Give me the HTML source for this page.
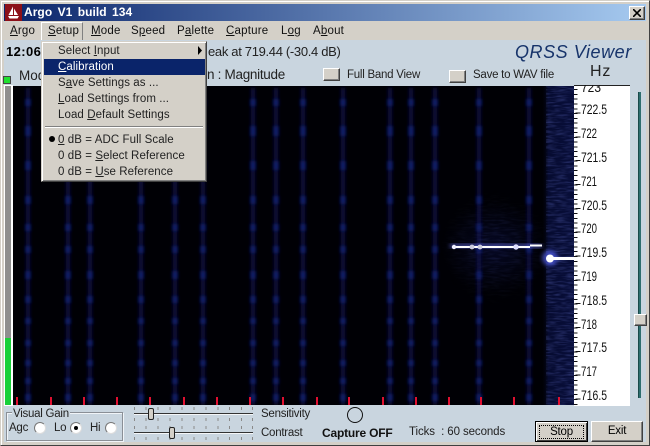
<!DOCTYPE html>
<html><head><meta charset="utf-8">
<style>
html,body{margin:0;padding:0}
body{width:650px;height:446px;overflow:hidden;position:relative;background:#d4d0c8;font-family:"Liberation Sans",sans-serif;color:#000}
.a{position:absolute;white-space:nowrap}
.t{font-size:11.5px;line-height:14px;letter-spacing:-.25px}
.frame{position:absolute;left:0;top:0;width:648px;height:444px;border:1px solid #d4d0c8;border-right-color:#404040;border-bottom-color:#404040;box-shadow:inset 1px 1px 0 #fff}
.title{position:absolute;left:4px;top:4px;width:642px;height:17px;background:linear-gradient(90deg,#0a246a,#a6caf0)}
.client{position:absolute;left:4px;top:40px;width:642px;height:402px;background:#c9d5df}
.rb{background:#d4d0c8;box-sizing:border-box;border:1px solid;border-color:#fff #404040 #404040 #fff;box-shadow:inset -1px -1px 0 #808080}
.menu span{position:absolute;top:24px;font-size:11.5px;line-height:14px;letter-spacing:.2px;color:#111}
.pop{position:absolute;left:41px;top:41px;width:166px;height:141px;box-sizing:border-box;background:#d4d0c8;border:1px solid;border-color:#d4d0c8 #404040 #404040 #d4d0c8;box-shadow:inset 1px 1px 0 #fff,inset -1px -1px 0 #808080}
.pi{position:absolute;left:58px;font-size:11.5px;line-height:14px;letter-spacing:.08px;color:#222;white-space:nowrap}
.radio{position:absolute;width:12px;height:12px;border-radius:50%;background:#fff;box-sizing:border-box;border:1px solid;border-color:#777 #ddd #ddd #777}
.btn{position:absolute;box-sizing:border-box;background:#d4d0c8;border:1px solid;border-color:#fff #404040 #404040 #fff;box-shadow:inset -1px -1px 0 #808080;text-align:center;font-size:11.5px;line-height:18px;letter-spacing:-.2px}
</style></head><body>
<div class="frame"></div>
<div class="title"></div>
<svg class="a" style="left:5px;top:4px" width="17" height="17" viewBox="0 0 17 17"><rect width="17" height="17" fill="#8c1018"/><path d="M8 2.5V11H3.5zM9 4.5 13 11H9zM3 12h11l-1.500 2.500h-8z" fill="#fff"/></svg>
<div class="a" style="left:24px;top:5px;font-size:12px;line-height:15px;font-weight:bold;color:#fff;letter-spacing:.05px;word-spacing:2px">Argo V1 build 134</div>
<div class="btn" style="left:629px;top:6px;width:16px;height:14px"></div>
<svg class="a" style="left:633px;top:9px" width="8" height="8"><path d="M0 0 8 8M8 0 0 8" stroke="#000" stroke-width="1.6"/></svg>

<div class="a" style="left:41px;top:22px;width:42px;height:19px;box-sizing:border-box;border:1px solid;border-color:#fff #808080 #808080 #fff"></div>
<div class="menu">
<span style="left:10px"><u>A</u>rgo</span>
<span style="left:48px"><u>S</u>etup</span>
<span style="left:91px"><u>M</u>ode</span>
<span style="left:131px">S<u>p</u>eed</span>
<span style="left:177px">P<u>a</u>lette</span>
<span style="left:226px"><u>C</u>apture</span>
<span style="left:281px">L<u>o</u>g</span>
<span style="left:313px">A<u>b</u>out</span>
</div>

<div class="client"></div>
<div class="a" style="left:6px;top:44px;font-size:13px;line-height:16px;font-weight:bold;letter-spacing:.4px">12:06</div>
<div class="a" style="left:208px;top:44px;font-size:13px;line-height:16px;letter-spacing:-.32px;color:#222">eak at 719.44 (-30.4 dB)</div>
<div class="a" style="left:19px;top:68px;font-size:13.5px;line-height:16px;color:#222">Mod</div>
<div class="a" style="left:207px;top:67px;font-size:13.5px;line-height:16px;color:#222;letter-spacing:-.3px">n : Magnitude</div>
<div class="a" style="left:515px;top:41px;font-size:18px;line-height:22px;font-style:italic;color:#16336a;letter-spacing:.55px">QRSS Viewer</div>
<div class="rb a" style="left:323px;top:68px;width:17px;height:13px"></div>
<div class="a t" style="left:347px;top:68px;color:#222">Full Band View</div>
<div class="rb a" style="left:449px;top:70px;width:17px;height:13px"></div>
<div class="a t" style="left:473px;top:68px;color:#222">Save to WAV file</div>
<div class="a" style="left:590px;top:63px;font-size:16px;line-height:18px;color:#222;letter-spacing:.8px">Hz</div>

<!-- level meter -->
<div class="a" style="left:3px;top:76px;width:8px;height:8px;background:#20e030;border:1px solid #444;box-sizing:border-box"></div>
<div class="a" style="left:4px;top:85px;width:9px;height:321px;background:#fff"></div>
<div class="a" style="left:5px;top:86px;width:6px;height:252px;background:#8f8f8f"></div>
<div class="a" style="left:5px;top:338px;width:6px;height:67px;background:#18d038"></div>

<!-- waterfall -->
<svg class="a" style="left:13px;top:86px" width="561" height="319" viewBox="13 86 561 319">
<defs>
<filter id="b" x="-5%" y="-5%" width="110%" height="110%"><feGaussianBlur stdDeviation="1.6 1.5"/></filter>
<filter id="g" x="-20%" y="-20%" width="140%" height="140%"><feGaussianBlur stdDeviation="2.2"/></filter>
<filter id="n" x="0" y="0" width="100%" height="100%"><feTurbulence type="fractalNoise" baseFrequency=".09 .55" numOctaves="2" seed="4"/><feColorMatrix values="0 0 0 0 .06  0 0 0 0 .08  0 0 0 0 .32  1.1 0 0 0 -.45"/></filter>
<linearGradient id="band" x1="0" x2="1" y1="0" y2="0"><stop offset="0" stop-color="#000" stop-opacity="0"/><stop offset=".22" stop-color="#060b30"/><stop offset="1" stop-color="#080e3a"/></linearGradient>
<radialGradient id="hz"><stop offset="0" stop-color="#141c70" stop-opacity=".3"/><stop offset="1" stop-color="#0a1050" stop-opacity="0"/></radialGradient>
<radialGradient id="hz2"><stop offset="0" stop-color="#888"/><stop offset=".55" stop-color="#444"/><stop offset="1" stop-color="#000"/></radialGradient>
<mask id="hm"><rect x="440" y="190" width="110" height="115" fill="url(#hz2)"/></mask>
</defs>
<rect x="13" y="86" width="561" height="319" fill="#000005"/>
<g filter="url(#b)" stroke="#080e3c" stroke-width="4">
<path d="M28 88V405M68 88V405M90 88V405M141 88V405M175 88V405M203 88V405M253 88V405M276 88V405M303 88V405M343 88V405M390 88V405M411 88V405M435 88V405M479 88V405M529 88V405"/>
</g>
<g filter="url(#b)" stroke="#111c66" stroke-width="5" stroke-dasharray="7 20 10 25 9 26 8 20 7 15 7 18 8 17 7 15 6 16 6 14 6 12 6 10 7 16 6 15 6 10">
<path d="M28 99V405M68 99V405M90 99V405M141 99V405M175 99V405M203 99V405M253 99V405M276 99V405M303 99V405M343 99V405M390 99V405M411 99V405M435 99V405M479 99V405M529 99V405"/>
</g>
<rect x="440" y="190" width="110" height="115" fill="#000" filter="url(#n)" mask="url(#hm)"/>
<rect x="442" y="200" width="106" height="95" fill="url(#hz)"/>
<rect x="541" y="86" width="33" height="319" fill="url(#band)"/>
<rect x="546" y="86" width="28" height="319" filter="url(#n)"/>
<rect x="450" y="244" width="92" height="4" fill="#6f78ff" opacity=".6" filter="url(#g)"/>
<path d="M454 247H530M530 245.500H542" stroke="#fff" stroke-width="2"/>
<circle cx="454" cy="247" r="2.200" fill="#eef"/>
<circle cx="472" cy="247" r="2.400" fill="#ccd"/><circle cx="480" cy="247" r="2.400" fill="#ccd"/><circle cx="516" cy="247" r="2.700" fill="#ddf"/>
<circle cx="550" cy="258" r="8" fill="#5a68ff" opacity=".65" filter="url(#g)"/>
<circle cx="550" cy="258.500" r="4" fill="#fff"/>
<path d="M551 258.500H574" stroke="#fff" stroke-width="3"/>
<path d="M17 397v8M51 397v8M84 397v8M117 397v8M150 397v8M184 397v8M217 397v8M250 397v8M283 397v8M317 397v8M349 397v8M383 397v8M416 397v8M449 397v8M481 397v8M514 397v8M559 397v8" stroke="#e01030" stroke-width="2"/>
</svg>

<!-- scale -->
<svg class="a" style="left:574px;top:85px" width="57" height="321" viewBox="574 85 57 321" font-family="'Liberation Sans',sans-serif" font-size="14" fill="#111">
<rect x="574" y="85" width="56" height="321" fill="#fff"/>
<path d="M574 85.500H630" fill="none" stroke="#222"/>
<path d="M574 89.200V405" stroke="#111" stroke-width="8" stroke-dasharray="1 3.766" transform="translate(-.5 0)" shape-rendering="crispEdges"/>
<path d="M578 112.500V405" stroke="#111" stroke-width="5" stroke-dasharray="1 22.830" shape-rendering="crispEdges"/>
<text x="581" y="92" textLength="20" lengthAdjust="spacingAndGlyphs">723</text>
<text x="581" y="114" textLength="26" lengthAdjust="spacingAndGlyphs">722.5</text>
<text x="581" y="138" textLength="16" lengthAdjust="spacingAndGlyphs">722</text>
<text x="581" y="162" textLength="26" lengthAdjust="spacingAndGlyphs">721.5</text>
<text x="581" y="186" textLength="16" lengthAdjust="spacingAndGlyphs">721</text>
<text x="581" y="210" textLength="26" lengthAdjust="spacingAndGlyphs">720.5</text>
<text x="581" y="233" textLength="16" lengthAdjust="spacingAndGlyphs">720</text>
<text x="581" y="257" textLength="26" lengthAdjust="spacingAndGlyphs">719.5</text>
<text x="581" y="281" textLength="16" lengthAdjust="spacingAndGlyphs">719</text>
<text x="581" y="305" textLength="26" lengthAdjust="spacingAndGlyphs">718.5</text>
<text x="581" y="329" textLength="16" lengthAdjust="spacingAndGlyphs">718</text>
<text x="581" y="352" textLength="26" lengthAdjust="spacingAndGlyphs">717.5</text>
<text x="581" y="376" textLength="16" lengthAdjust="spacingAndGlyphs">717</text>
<text x="581" y="400" textLength="26" lengthAdjust="spacingAndGlyphs">716.5</text>
</svg>

<!-- vertical slider -->
<div class="a" style="left:638px;top:92px;width:3px;height:306px;background:#2e6e6e;border-left:1px solid #1a4a4a;box-sizing:border-box"></div>
<div class="rb a" style="left:634px;top:314px;width:13px;height:12px"></div>

<!-- bottom controls -->
<div class="a" style="left:6px;top:412px;width:117px;height:29px;box-sizing:border-box;border:1px solid #8a8f96;box-shadow:inset 1px 1px 0 #f0f4f8,1px 1px 0 #f0f4f8"></div>
<div class="a t" style="left:12px;top:407px;padding:0 1px;background:#c9d5df;color:#222">Visual Gain</div>
<div class="a t" style="left:9px;top:421px;color:#222">Agc</div>
<div class="radio" style="left:34px;top:422px"></div>
<div class="a t" style="left:54px;top:421px;color:#222">Lo</div>
<div class="radio" style="left:70px;top:422px"></div>
<div class="a" style="left:74px;top:426px;width:4px;height:4px;border-radius:50%;background:#000"></div>
<div class="a t" style="left:90px;top:421px;color:#222">Hi</div>
<div class="radio" style="left:105px;top:422px"></div>

<svg class="a" style="left:132px;top:406px" width="124" height="36" viewBox="132 406 124 36">
<g stroke="#8a8a8a" stroke-width="1" shape-rendering="crispEdges">
<path d="M134 413.500H253M134 432.500H253" stroke="#333"/>
<path d="M134 414.500H253M134 433.500H253" stroke="#f4f6f8"/>
<path d="M134.500 407v3M146 407v3M158 407v3M170 407v3M182 407v3M194 407v3M206 407v3M218 407v3M229.500 407v3M241.500 407v3M252.500 407v3"/>
<path d="M134.500 418v3M146 418v3M158 418v3M170 418v3M182 418v3M194 418v3M206 418v3M218 418v3M229.500 418v3M241.500 418v3M252.500 418v3"/>
<path d="M134.500 426v3M146 426v3M158 426v3M170 426v3M182 426v3M194 426v3M206 426v3M218 426v3M229.500 426v3M241.500 426v3M252.500 426v3"/>
<path d="M134.500 437v3M146 437v3M158 437v3M170 437v3M182 437v3M194 437v3M206 437v3M218 437v3M229.500 437v3M241.500 437v3M252.500 437v3"/>
</g>
<rect x="148.500" y="408.500" width="5" height="11" rx="1.500" fill="#d4d0c8" stroke="#222"/>
<rect x="169.500" y="427.500" width="5" height="11" rx="1.500" fill="#d4d0c8" stroke="#222"/>
</svg>
<div class="a t" style="left:261px;top:407px;color:#222">Sensitivity</div>
<div class="a t" style="left:261px;top:426px;color:#222">Contrast</div>
<svg class="a" style="left:345px;top:405px" width="20" height="20"><circle cx="10" cy="10" r="7.500" fill="#c9d5df" stroke="#111"/></svg>
<div class="a" style="left:322px;top:426px;font-size:12px;line-height:14px;font-weight:bold;letter-spacing:-.2px;color:#111">Capture OFF</div>
<div class="a t" style="left:409px;top:425px;letter-spacing:-.1px;color:#222">Ticks&nbsp; : 60 seconds</div>
<div class="btn" style="left:535px;top:421px;width:53px;height:21px;border:1px solid #000;box-shadow:inset 1px 1px 0 #fff,inset -1px -1px 0 #404040"><span style="display:block;margin:3px 3px;border:1px dotted #000;line-height:12px;height:12px">Stop</span></div>
<div class="btn" style="left:591px;top:421px;width:52px;height:21px">Exit</div>

<!-- popup menu -->
<div class="pop"></div>
<div class="a" style="left:44px;top:59px;width:161px;height:16px;background:#0a246a"></div>
<div class="pi" style="top:44px">Select <u>I</u>nput</div>
<svg class="a" style="left:197px;top:46px" width="6" height="9"><path d="M1 0 5 4.500 1 9z" fill="#000"/></svg>
<div class="pi" style="top:60px;color:#fff"><u>C</u>alibration</div>
<div class="pi" style="top:76px">S<u>a</u>ve Settings as ...</div>
<div class="pi" style="top:92px"><u>L</u>oad Settings from ...</div>
<div class="pi" style="top:108px">Load <u>D</u>efault Settings</div>
<div class="a" style="left:45px;top:126px;width:158px;height:1px;background:#808080;border-bottom:1px solid #fff"></div>
<div class="a" style="left:49px;top:136px;width:6px;height:6px;border-radius:50%;background:#000"></div>
<div class="pi" style="top:133px"><u>0</u> dB = ADC Full Scale</div>
<div class="pi" style="top:149px">0 dB = <u>S</u>elect Reference</div>
<div class="pi" style="top:165px">0 dB = <u>U</u>se Reference</div>
</body></html>
